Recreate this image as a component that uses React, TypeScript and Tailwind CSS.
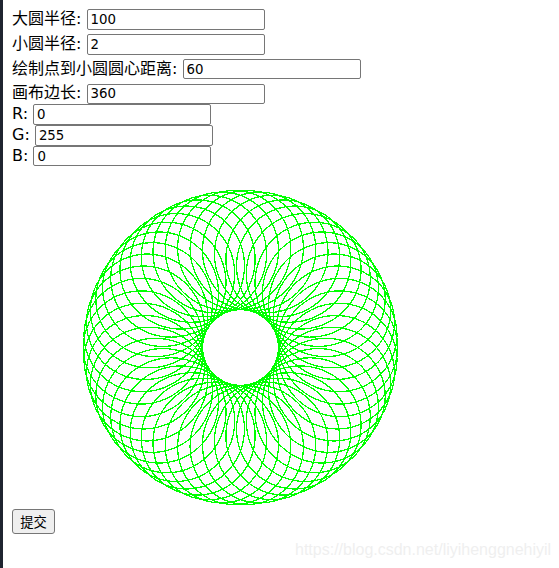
import React from "react";

const R = 100, r = 2, d = 60, cx = 228.5, cy = 181.5, s = 0.995;

function buildPath() {
  let p = "";
  const k = (R - r) / r;
  for (let i = 0; i <= 8000; i++) {
    const t = (i / 8000) * Math.PI * 2;
    const x = cx + s * ((R - r) * Math.cos(t) + d * Math.cos(k * t));
    const y = cy + s * ((R - r) * Math.sin(t) - d * Math.sin(k * t));
    p += `${i ? "L" : "M"}${x.toFixed(2)} ${y.toFixed(2)}`;
  }
  return p;
}

const Field = ({ label, value }: { label: string; value: string }) => (
  <>
    {label}: <input defaultValue={value} className="w-[178px] h-[20.5px] border border-[#767676] rounded-[2px] px-[3px] py-[1px] text-[13.33px] bg-white text-black outline-none" />
    <br />
  </>
);

export default function App() {
  return (
    <div className="relative h-[568px] w-[559px] overflow-hidden bg-white text-black text-[16px] leading-[normal] pl-[9px] pt-[5px] border-l-[3px] border-[#1f2430] font-['DejaVu_Sans','Noto_Sans_CJK_SC',sans-serif] box-border">
      <Field label="大圆半径" value="100" />
      <Field label="小圆半径" value="2" />
      <Field label="绘制点到小圆圆心距离" value="60" />
      <Field label="画布边长" value="360" />
      <Field label="R" value="0" />
      <Field label="G" value="255" />
      <Field label="B" value="0" />
      <svg width="460" height="343" viewBox="0 0 460 343" className="block">
        <path d={buildPath()} fill="none" stroke="#00ff00" strokeWidth="1.3" shapeRendering="crispEdges" />
      </svg>
      <button className="block h-[25px] w-[43px] border border-[#767676] rounded-[3px] bg-[#efefef] text-[13.33px]">提交</button>
      <span className="absolute left-[292px] top-[541px] text-[16px] text-[#efefef] font-['Liberation_Sans',sans-serif]">https://blog.csdn.net/liyihenggnehiyil</span>
    </div>
  );
}
